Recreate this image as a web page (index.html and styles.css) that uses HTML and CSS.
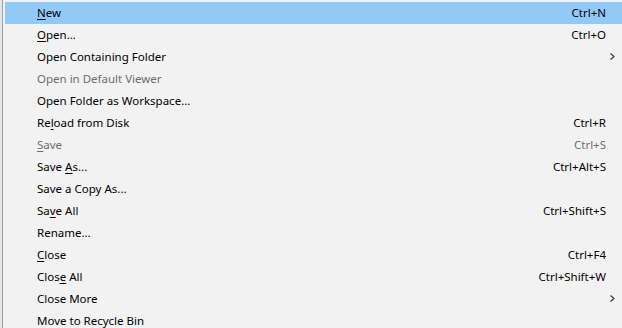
FILE: index.html
```html
<!DOCTYPE html>
<html>
<head>
<meta charset="utf-8">
<link rel="stylesheet" href="styles.css">
</head>
<body>
<div class="screen">
  <div class="behind"></div>
  <div class="menu">
    <div class="item hot"><span class="label"><u>N</u>ew</span><span class="key">Ctrl+N</span><span class="arrow"></span></div>
    <div class="item"><span class="label"><u>O</u>pen...</span><span class="key">Ctrl+O</span><span class="arrow"></span></div>
    <div class="item"><span class="label">Open Containing Folder</span><span class="key"></span><span class="arrow"><svg width="5" height="7" viewBox="0 0 5 7"><path d="M0.5 0.5 L4 3.5 L0.5 6.5" fill="none" stroke="#3c3c3c" stroke-width="1.2"/></svg></span></div>
    <div class="item off"><span class="label">Open in Default Viewer</span><span class="key"></span><span class="arrow"></span></div>
    <div class="item"><span class="label">Open Folder as Workspace...</span><span class="key"></span><span class="arrow"></span></div>
    <div class="item"><span class="label">Re<u>l</u>oad from Disk</span><span class="key">Ctrl+R</span><span class="arrow"></span></div>
    <div class="item off"><span class="label"><u>S</u>ave</span><span class="key">Ctrl+S</span><span class="arrow"></span></div>
    <div class="item"><span class="label">Save <u>A</u>s...</span><span class="key">Ctrl+Alt+S</span><span class="arrow"></span></div>
    <div class="item"><span class="label">Save a Copy As...</span><span class="key"></span><span class="arrow"></span></div>
    <div class="item"><span class="label">Sa<u>v</u>e All</span><span class="key">Ctrl+Shift+S</span><span class="arrow"></span></div>
    <div class="item"><span class="label">Rename...</span><span class="key"></span><span class="arrow"></span></div>
    <div class="item"><span class="label"><u>C</u>lose</span><span class="key">Ctrl+F4</span><span class="arrow"></span></div>
    <div class="item"><span class="label">Clos<u>e</u> All</span><span class="key">Ctrl+Shift+W</span><span class="arrow"></span></div>
    <div class="item"><span class="label">Close More</span><span class="key"></span><span class="arrow"><svg width="5" height="7" viewBox="0 0 5 7"><path d="M0.5 0.5 L4 3.5 L0.5 6.5" fill="none" stroke="#3c3c3c" stroke-width="1.2"/></svg></span></div>
    <div class="item"><span class="label">Move to Recycle Bin</span><span class="key"></span><span class="arrow"></span></div>
  </div>
</div>
</body>
</html>
```
FILE: styles.css
```css
html, body {
  margin: 0;
  padding: 0;
  width: 622px;
  height: 328px;
  overflow: hidden;
  background: #f2f2f2;
}
.screen {
  display: flex;
  width: 622px;
  height: 328px;
  overflow: hidden;
}
.behind {
  width: 2px;
  flex: none;
  background: #e6e6e6;
}
.menu {
  flex: 1;
  border-left: 1px solid #a0a0a0;
  padding: 2px 0 0 2px;
  background: #f2f2f2;
  font-family: "Noto Sans", "Open Sans", sans-serif;
  font-size: 11.5px;
  color: #000;
}
.item {
  box-sizing: border-box;
  display: grid;
  grid-template-columns: 1fr auto 16px;
  align-items: center;
  height: 22px;
  padding-left: 32px;
  padding-bottom: 2px;
}
.item.hot {
  background: #91c9f7;
}
.item.off {
  color: #6d6d6d;
}
.label {
  white-space: nowrap;
}
.key {
  white-space: nowrap;
  text-align: right;
}
.arrow {
  display: flex;
  align-items: center;
  padding-left: 4px;
  height: 20px;
}
u {
  text-decoration: underline;
  text-underline-offset: 2px;
}
```
